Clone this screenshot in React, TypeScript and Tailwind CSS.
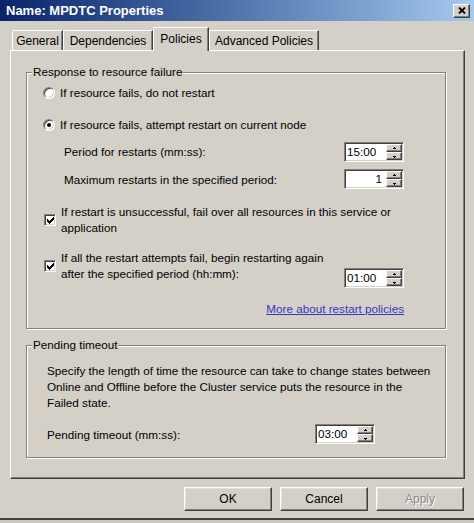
import React from "react";

function Arrow({ up }: { up?: boolean }) {
  return (
    <svg width="5" height="3" viewBox="0 0 5 3" shapeRendering="crispEdges">
      {up ? (
        <>
          <rect x="2" y="0" width="1" height="1" fill="#000" />
          <rect x="1" y="1" width="3" height="1" fill="#000" />
        </>
      ) : (
        <>
          <rect x="1" y="1" width="3" height="1" fill="#000" />
          <rect x="2" y="2" width="1" height="1" fill="#000" />
        </>
      )}
    </svg>
  );
}

function SpinHalf({ up }: { up?: boolean }) {
  return (
    <div className="flex flex-1 items-center justify-center border border-t-white border-l-white border-r-[#404040] border-b-[#404040] bg-[#d4d0c8] shadow-[inset_-1px_-1px_0_#808080]">
      <Arrow up={up} />
    </div>
  );
}

function Spin({ value, right }: { value: string; right?: boolean }) {
  return (
    <div className="flex h-[20px] w-[60px] shrink-0 border border-t-[#808080] border-l-[#808080] border-r-white border-b-white bg-white p-[1px] shadow-[inset_1px_1px_0_#404040,inset_-1px_-1px_0_#d4d0c8]">
      <div
        className={
          right
            ? "flex flex-1 items-center justify-end pr-[4px] text-[11.7px] leading-none"
            : "flex flex-1 items-center pl-[1px] text-[11.7px] leading-none"
        }
      >
        {value}
      </div>
      <div className="flex w-[16px] flex-col">
        <SpinHalf up />
        <SpinHalf />
      </div>
    </div>
  );
}

function Radio({ checked }: { checked?: boolean }) {
  return (
    <div className="flex h-[12px] w-[12px] shrink-0 items-center justify-center rounded-full border border-t-[#808080] border-l-[#808080] border-r-white border-b-white bg-white shadow-[inset_1px_1px_0_#404040,inset_-1px_-1px_0_#d4d0c8]">
      {checked && <div className="h-[4px] w-[4px] rounded-full bg-black" />}
    </div>
  );
}

function Check() {
  return (
    <div className="flex h-[12px] w-[12px] shrink-0 items-center justify-center border border-t-[#808080] border-l-[#808080] border-r-white border-b-white bg-white shadow-[inset_1px_1px_0_#404040,inset_-1px_-1px_0_#d4d0c8]">
      <svg width="7" height="7" viewBox="0 0 7 7" shapeRendering="crispEdges">
        <rect x="6" y="0" width="1" height="1" fill="#000" />
        <rect x="5" y="1" width="2" height="1" fill="#000" />
        <rect x="0" y="2" width="1" height="1" fill="#000" />
        <rect x="4" y="2" width="3" height="1" fill="#000" />
        <rect x="0" y="3" width="2" height="1" fill="#000" />
        <rect x="3" y="3" width="3" height="1" fill="#000" />
        <rect x="0" y="4" width="5" height="1" fill="#000" />
        <rect x="1" y="5" width="3" height="1" fill="#000" />
        <rect x="2" y="6" width="1" height="1" fill="#000" />
      </svg>
    </div>
  );
}

function Group({ title, className, children }: { title: string; className: string; children: React.ReactNode }) {
  return (
    <div className={className}>
      <div className="absolute left-[5px] top-[-9px] bg-[#d4d0c8] px-[1px] leading-[16px]">{title}</div>
      {children}
    </div>
  );
}

function Button({ label, disabled }: { label: string; disabled?: boolean }) {
  return (
    <div
      className={
        disabled
          ? "flex h-[24px] w-[88px] items-center justify-center border border-t-white border-l-white border-r-[#404040] border-b-[#404040] text-[12px] text-[#8a8a8a] shadow-[inset_-1px_-1px_0_#808080,inset_1px_1px_0_#dfdfdf] [text-shadow:1px_1px_0_#fff]"
          : "flex h-[24px] w-[88px] items-center justify-center border border-t-white border-l-white border-r-[#404040] border-b-[#404040] text-[12px] shadow-[inset_-1px_-1px_0_#808080,inset_1px_1px_0_#dfdfdf]"
      }
    >
      {label}
    </div>
  );
}

export default function App() {
  return (
    <div className="flex h-[523px] w-[474px] flex-col overflow-hidden bg-[#d4d0c8] font-['Liberation_Sans',Arial,sans-serif] text-[11.7px] leading-[16px] text-black">
      {/* Title bar */}
      <div className="flex h-[21px] shrink-0 items-center justify-between bg-gradient-to-r from-[#0a246a] to-[#a6caf0] pl-[6px] pr-[4px]">
        <span className="text-[13px] font-bold leading-none text-white">Name: MPDTC Properties</span>
        <div className="flex h-[14px] w-[17px] items-center justify-center border border-t-white border-l-white border-r-[#404040] border-b-[#404040] bg-[#d4d0c8] shadow-[inset_-1px_-1px_0_#808080]">
          <svg width="8" height="7" viewBox="0 0 8 7">
            <path d="M1 0.5 L7 6.5 M7 0.5 L1 6.5" stroke="#000" strokeWidth="1.8" />
          </svg>
        </div>
      </div>

      {/* Tabs */}
      <div className="flex h-[29px] shrink-0 items-end pl-[12px] text-[12px]">
        <div className="flex h-[20px] w-[51px] justify-center rounded-tl-[2px] border-l border-t border-r border-l-white border-t-white border-r-[#404040] pt-[3px] leading-[14px] shadow-[inset_-1px_0_0_#808080]">
          General
        </div>
        <div className="flex h-[20px] w-[90px] justify-center rounded-tl-[2px] border-l border-t border-r border-l-white border-t-white border-r-[#404040] pt-[3px] leading-[14px] shadow-[inset_-1px_0_0_#808080]">
          Dependencies
        </div>
        <div className="relative z-10 mb-[-1px] flex h-[24px] w-[56px] justify-center rounded-tl-[2px] border-l border-t border-r border-l-white border-t-white border-r-[#404040] bg-[#d4d0c8] pt-[4px] leading-[14px] shadow-[inset_-1px_0_0_#808080]">
          Policies
        </div>
        <div className="flex h-[20px] w-[110px] justify-center rounded-tl-[2px] border-l border-t border-r border-l-white border-t-white border-r-[#404040] pt-[3px] leading-[14px] shadow-[inset_-1px_0_0_#808080]">
          Advanced Policies
        </div>
      </div>

      {/* Panel */}
      <div className="ml-[10px] flex h-[429px] w-[455px] shrink-0 flex-col border border-t-white border-l-white border-r-[#404040] border-b-[#404040] shadow-[inset_-1px_-1px_0_#808080]">
        <Group
          title="Response to resource failure"
          className="relative ml-[15px] mt-[21px] flex h-[257px] w-[420px] flex-col border border-[#808080] pl-[16px] pr-[41px] pt-[12px] shadow-[1px_1px_0_#fff,inset_1px_1px_0_#fff]"
        >
          <div className="flex h-[16px] items-center">
            <Radio />
            <span className="ml-[5px]">If resource fails, do not restart</span>
          </div>
          <div className="mt-[16px] flex h-[16px] items-center">
            <Radio checked />
            <span className="ml-[5px]">If resource fails, attempt restart on current node</span>
          </div>
          <div className="mt-[9px] flex h-[20px] items-center justify-between">
            <span className="ml-[21px]">Period for restarts (mm:ss):</span>
            <Spin value="15:00" />
          </div>
          <div className="mt-[7px] flex h-[20px] items-center justify-between">
            <span className="ml-[21px] pt-[2px]">Maximum restarts in the specified period:</span>
            <Spin value="1" right />
          </div>
          <div className="mt-[15px] flex items-center">
            <div className="ml-[1px]">
              <Check />
            </div>
            <span className="ml-[5px] whitespace-nowrap">
              If restart is unsuccessful, fail over all resources in this service or
              <br />
              application
            </span>
          </div>
          <div className="mt-[14px] flex items-start justify-between">
            <div className="flex h-[32px] items-center">
              <div className="ml-[1px]">
                <Check />
              </div>
              <span className="ml-[5px] whitespace-nowrap">
                If all the restart attempts fail, begin restarting again
                <br />
                after the specified period (hh:mm):
              </span>
            </div>
            <div className="mt-[18px]">
              <Spin value="01:00" />
            </div>
          </div>
          <span className="mt-[13px] self-end text-[#3535c8] underline">More about restart policies</span>
        </Group>

        <Group
          title="Pending timeout"
          className="relative ml-[15px] mt-[16px] flex h-[113px] w-[420px] flex-col border border-[#808080] pl-[20px] pt-[17px] shadow-[1px_1px_0_#fff,inset_1px_1px_0_#fff]"
        >
          <p className="whitespace-nowrap">
            Specify the length of time the resource can take to change states between
            <br />
            Online and Offline before the Cluster service puts the resource in the
            <br />
            Failed state.
          </p>
          <div className="mt-[13px] flex h-[20px] items-center">
            <span className="w-[268px] shrink-0 pt-[1px]">Pending timeout (mm:ss):</span>
            <Spin value="03:00" />
          </div>
        </Group>
      </div>

      {/* Buttons */}
      <div className="mt-[8px] flex shrink-0 justify-end gap-[8px] pr-[10px]">
        <Button label="OK" />
        <Button label="Cancel" />
        <Button label="Apply" disabled />
      </div>

      <div className="mt-[7px] h-[2px] shrink-0 bg-[#404040]" />
      <div className="flex-1 bg-[#cdc9c1]" />
    </div>
  );
}
